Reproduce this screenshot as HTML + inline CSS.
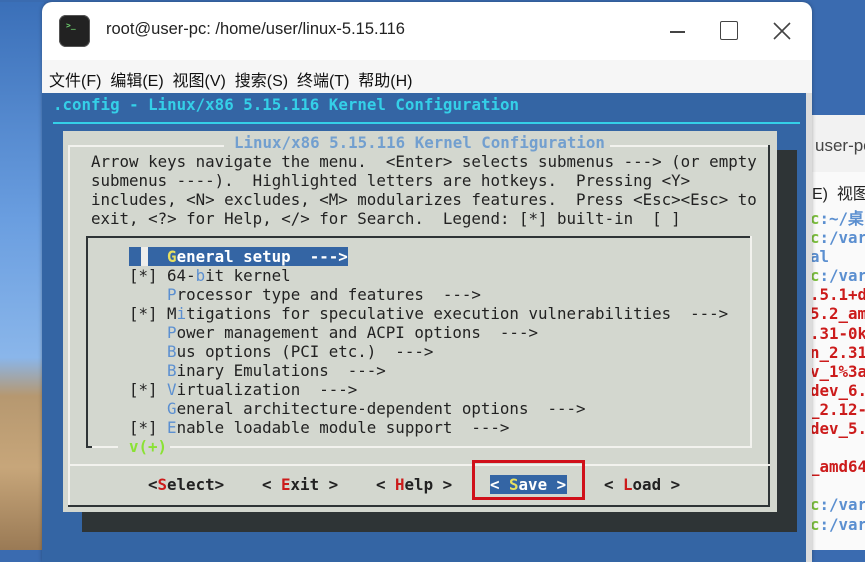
<!DOCTYPE html>
<html><head><meta charset="utf-8"><style>
*{margin:0;padding:0;box-sizing:border-box}
body{width:865px;height:550px;overflow:hidden;position:relative;background:#3a6bb0;font-family:"Liberation Sans","Noto Sans CJK SC",sans-serif}
.abs{position:absolute}
.m{font-family:"DejaVu Sans Mono","Liberation Mono",monospace;font-size:15.8px;line-height:19px;white-space:pre;position:absolute}
.b{color:#5b8fd0}
.r{color:#cc1b1b}
.y{color:#e8e060}
.nw{white-space:nowrap}
</style></head><body>
<!-- left desktop background -->
<div class="abs" style="left:0;top:0;width:44px;height:550px;background:linear-gradient(#3a6fb8 0,#6a9ee0 40%,#8ab6ea 65%,#b69870 72%,#c7a67a 85%,#9a7a55 100%)"></div>
<div class="abs" style="left:0;top:0;width:865px;height:2px;background:#3a6bb0"></div>
<!-- right background window -->
<div class="abs" style="left:812px;top:115px;width:53px;height:435px;background:#fafafa;overflow:hidden">
  <div class="abs" style="left:0;top:0;width:53px;height:57px;background:#f2f2f2"></div>
  <div class="abs nw" style="left:3px;top:21px;font-size:17px;color:#444">user-pc</div>
  <div class="abs nw" style="left:0;top:65px;font-size:16px;color:#222">E)&nbsp;&nbsp;视图</div>
  <div class="m" style="left:-2px;top:94px;font-weight:bold;line-height:19.1px"><span style="color:#7ec040">c</span><span style="color:#5b8fd0">:~/桌</span>
<span style="color:#7ec040">c</span><span style="color:#5b8fd0">:/var</span>
<span style="color:#5b8fd0">al</span>
<span style="color:#7ec040">c</span><span style="color:#5b8fd0">:/var</span>
<span class="r">.5.1+d</span>
<span class="r">5.2_am</span>
<span class="r">.31-0k</span>
<span class="r">n_2.31</span>
<span class="r">v_1%3a</span>
<span class="r">dev_6.</span>
<span class="r">_2.12-</span>
<span class="r">dev_5.</span>

<span class="r">_amd64</span>

<span style="color:#7ec040">c</span><span style="color:#5b8fd0">:/var</span>
<span style="color:#7ec040">c</span><span style="color:#5b8fd0">:/var</span></div>
</div>
<!-- main window -->
<div class="abs" style="left:42px;top:2px;width:770px;height:560px;background:#fff;border-radius:10px 10px 0 0;overflow:hidden;box-shadow:0 0 4px rgba(0,0,0,.3)">
  <div class="abs" style="left:0;top:58px;width:770px;height:35px;background:#f6f6f6"></div>
  <div class="abs" style="left:0;top:91px;width:770px;height:470px;background:#3465a4"></div>
  <div class="abs" style="left:764px;top:91px;width:6px;height:470px;background:#dcdcdc"></div>
</div>
<!-- terminal icon -->
<div class="abs" style="left:59px;top:15px;width:31px;height:32px;border-radius:7px;background:#222;box-shadow:inset 0 0 0 1px #555"></div>
<div class="abs" style="left:66px;top:21px;font-family:'DejaVu Sans Mono',monospace;font-size:8px;color:#6fd36f;font-weight:bold">&gt;_</div>
<div class="abs nw" style="left:106px;top:20px;font-size:16.5px;color:#222">root@user-pc: /home/user/linux-5.15.116</div>
<!-- window controls -->
<div class="abs" style="left:670px;top:31px;width:15px;height:1.5px;background:#444"></div>
<div class="abs" style="left:720px;top:21px;width:18px;height:19px;border:1.6px solid #444;border-radius:2px"></div>
<svg class="abs" style="left:773px;top:22px" width="18" height="18"><path d="M1 1L17 17M17 1L1 17" stroke="#444" stroke-width="1.6"/></svg>
<div class="abs nw" style="left:49px;top:67px;font-size:16px;color:#111">文件(F)&nbsp; 编辑(E)&nbsp; 视图(V)&nbsp; 搜索(S)&nbsp; 终端(T)&nbsp; 帮助(H)</div>
<!-- mconfig header -->
<div class="m" style="left:53px;top:95px;color:#34d0e8;font-weight:bold">.config - Linux/x86 5.15.116 Kernel Configuration</div>
<div class="abs" style="left:53px;top:122px;width:747px;height:2px;background:#34d0e8"></div>
<!-- shadow -->
<div class="abs" style="left:82px;top:150px;width:715px;height:382px;background:#2e3436"></div>
<!-- dialog -->
<div class="abs" style="left:63px;top:131px;width:714px;height:381px;background:#d3d7cf"></div>
<div class="abs" style="left:68px;top:145px;width:702px;height:2px;background:#f2f2ee"></div>
<div class="abs" style="left:68px;top:145px;width:2px;height:362px;background:#f2f2ee"></div>
<div class="abs" style="left:768px;top:145px;width:2px;height:362px;background:#2e3436"></div>
<div class="abs" style="left:68px;top:505px;width:702px;height:2px;background:#2e3436"></div>
<div class="abs" style="left:224px;top:136px;width:386px;height:16px;background:#d3d7cf"></div>
<div class="m" style="left:234px;top:133px;color:#729fcf;font-weight:bold">Linux/x86 5.15.116 Kernel Configuration</div>
<div class="m" style="left:91px;top:152px;color:#222">Arrow keys navigate the menu.  &lt;Enter&gt; selects submenus ---&gt; (or empty
submenus ----).  Highlighted letters are hotkeys.  Pressing &lt;Y&gt;
includes, &lt;N&gt; excludes, &lt;M&gt; modularizes features.  Press &lt;Esc&gt;&lt;Esc&gt; to
exit, &lt;?&gt; for Help, &lt;/&gt; for Search.  Legend: [*] built-in  [ ]</div>
<!-- menu box -->
<div class="abs" style="left:86px;top:236px;width:666px;height:2px;background:#2e3436"></div>
<div class="abs" style="left:86px;top:236px;width:2px;height:212px;background:#2e3436"></div>
<div class="abs" style="left:750px;top:236px;width:2px;height:212px;background:#f2f2ee"></div>
<div class="abs" style="left:86px;top:446px;width:666px;height:2px;background:#f2f2ee"></div>
<div class="abs" style="left:86px;top:446px;width:6px;height:2px;background:#2e3436"></div>
<div class="abs" style="left:118px;top:440px;width:52px;height:14px;background:#d3d7cf"></div>
<!-- highlight -->
<div class="abs" style="left:129px;top:247px;width:219px;height:19px;background:#3465a4"></div>
<div class="abs" style="left:141px;top:247px;width:7px;height:19px;background:#eeeeec"></div>
<div class="m" style="left:129px;top:247px;color:#222"><span style="color:#fff;font-weight:bold">    <span class="y">G</span>eneral setup  ---&gt;</span>
[*] 64-<span class="b">b</span>it kernel
    <span class="b">P</span>rocessor type and features  ---&gt;
[*] M<span class="b">i</span>tigations for speculative execution vulnerabilities  ---&gt;
    <span class="b">P</span>ower management and ACPI options  ---&gt;
    <span class="b">B</span>us options (PCI etc.)  ---&gt;
    <span class="b">B</span>inary Emulations  ---&gt;
[*] <span class="b">V</span>irtualization  ---&gt;
    <span class="b">G</span>eneral architecture-dependent options  ---&gt;
[*] <span class="b">E</span>nable loadable module support  ---&gt;
<span style="color:#8ae234;font-weight:bold">v(+)</span></div>
<!-- separator -->
<div class="abs" style="left:68px;top:464px;width:702px;height:2px;background:#f2f2ee"></div>
<!-- buttons -->
<div class="abs" style="left:490px;top:475px;width:77px;height:19px;background:#3465a4"></div>
<div class="m" style="left:148px;top:475px;color:#222;font-weight:bold">&lt;<span class="r">S</span>elect&gt;</div>
<div class="m" style="left:262px;top:475px;color:#222;font-weight:bold">&lt; <span class="r">E</span>xit &gt;</div>
<div class="m" style="left:376px;top:475px;color:#222;font-weight:bold">&lt; <span class="r">H</span>elp &gt;</div>
<div class="m" style="left:490px;top:475px;color:#fff;font-weight:bold">&lt; <span class="y">S</span>ave &gt;</div>
<div class="m" style="left:604px;top:475px;color:#222;font-weight:bold">&lt; <span class="r">L</span>oad &gt;</div>
<div class="abs" style="left:472px;top:460px;width:113px;height:40px;border:3px solid #d0101a"></div>
</body></html>
